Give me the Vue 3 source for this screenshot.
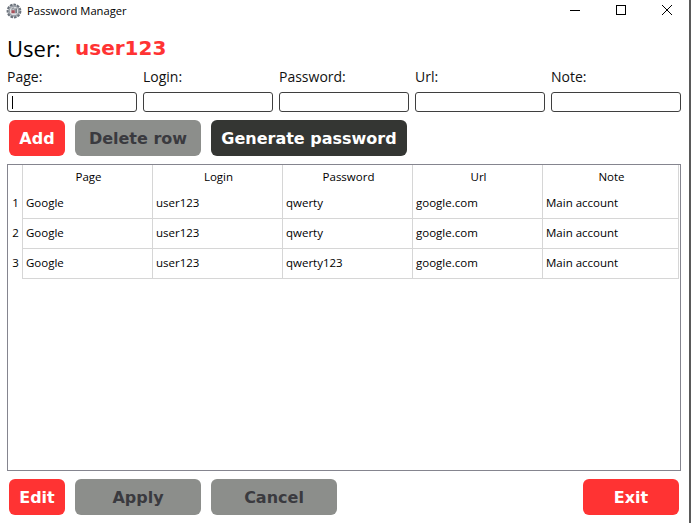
<template>
  <div class="window">
    <div class="titlebar">
      <svg class="app-icon" width="16" height="16" viewBox="0 0 16 16">
        <circle cx="8" cy="8" r="6.4" fill="#c9cbce" stroke="#6a717b" stroke-width="2" stroke-dasharray="2.6 1" />
        <circle cx="8" cy="8" r="4.9" fill="#dcdee1" stroke="#858c96" stroke-width="1" />
        <rect x="5.4" y="7.2" width="3.4" height="3" fill="#a8505a" />
        <path d="M6 7.2V6a1.1 1.1 0 0 1 2.2 0v1.2" fill="none" stroke="#6b6f78" stroke-width="0.8" />
        <rect x="9.4" y="5.4" width="1.4" height="4.8" fill="#5f6670" />
      </svg>
      <span class="title">Password Manager</span>
      <div class="win-controls">
        <svg width="46" height="22" viewBox="0 0 46 22"><path d="M18 10.5H28" stroke="#000" stroke-width="1" /></svg>
        <svg width="46" height="22" viewBox="0 0 46 22"><rect x="18.5" y="5.5" width="9" height="9" fill="none" stroke="#000" stroke-width="1" /></svg>
        <svg width="46" height="22" viewBox="0 0 46 22"><path d="M18 5L28 15M28 5L18 15" stroke="#000" stroke-width="1" /></svg>
      </div>
    </div>

    <div class="content">
      <div class="user-line">
        <span class="user-label">User:</span>
        <span class="user-name">user123</span>
      </div>

      <div class="fields">
        <div v-for="(f, i) in fields" :key="f" class="field">
          <label>{{ f }}:</label>
          <div class="input" :class="{ focused: i === 0 }"></div>
        </div>
      </div>

      <div class="btn-row">
        <button class="btn red small">Add</button>
        <button class="btn grey wide">Delete row</button>
        <button class="btn dark generate">Generate password</button>
      </div>

      <div class="table-box">
        <div class="grid head">
          <div class="corner"></div>
          <div v-for="c in columns" :key="c.key" class="th">{{ c.label }}</div>
        </div>
        <div v-for="(row, n) in rows" :key="n" class="grid row">
          <div class="row-num">{{ n + 1 }}</div>
          <div v-for="c in columns" :key="c.key" class="td">{{ row[c.key] }}</div>
        </div>
      </div>

      <div class="btn-row bottom">
        <button class="btn red small">Edit</button>
        <button class="btn grey wide">Apply</button>
        <button class="btn grey wide">Cancel</button>
        <button class="btn red exit">Exit</button>
      </div>
    </div>
  </div>
</template>

<script setup>
const fields = ['Page', 'Login', 'Password', 'Url', 'Note']

const columns = [
  { key: 'page', label: 'Page' },
  { key: 'login', label: 'Login' },
  { key: 'password', label: 'Password' },
  { key: 'url', label: 'Url' },
  { key: 'note', label: 'Note' }
]

const rows = [
  { page: 'Google', login: 'user123', password: 'qwerty', url: 'google.com', note: 'Main account' },
  { page: 'Google', login: 'user123', password: 'qwerty', url: 'google.com', note: 'Main account' },
  { page: 'Google', login: 'user123', password: 'qwerty123', url: 'google.com', note: 'Main account' }
]
</script>

<style>
html, body {
  margin: 0;
  background: #fff;
}
</style>

<style scoped>
.window {
  width: 691px;
  height: 523px;
  box-sizing: border-box;
  background: #fff;
  border-right: 2px solid #5a5a5a;
  font-family: "Open Sans", "Noto Sans", sans-serif;
  color: #000;
  overflow: hidden;
}

.titlebar {
  height: 21px;
  display: flex;
  align-items: center;
  padding-left: 6px;
}

.app-icon {
  margin-right: 5px;
}

.title {
  font-size: 11.2px;
}

.win-controls {
  margin-left: auto;
  display: flex;
  margin-right: -1px;
  align-self: flex-start;
}

.content {
  padding: 0 8px 0 7px;
}

.user-line {
  height: 32px;
  margin-top: 11px;
  display: flex;
  align-items: center;
}

.user-label {
  font-size: 22px;
  width: 68px;
}

.user-name {
  font-family: "DejaVu Sans", sans-serif;
  font-weight: 700;
  font-size: 20px;
  color: #ff3333;
}

.fields {
  display: flex;
  gap: 6px;
  margin-top: 4px;
}

.field {
  width: 130px;
}

.field label {
  display: block;
  height: 17px;
  line-height: 17px;
  margin-bottom: 7px;
  font-size: 14px;
  color: #111;
}

.input {
  height: 20px;
  box-sizing: border-box;
  border: 1px solid #3f3f3f;
  border-radius: 3px;
  position: relative;
}

.input.focused::after {
  content: "";
  position: absolute;
  left: 4px;
  top: 3px;
  width: 1px;
  height: 13px;
  background: #000;
}

.btn-row {
  display: flex;
  gap: 10px;
  padding-left: 2px;
  margin-top: 8px;
}

.btn {
  height: 36px;
  border: 0;
  border-radius: 6px;
  padding: 0;
  font-family: "DejaVu Sans", sans-serif;
  font-weight: 700;
  font-size: 16px;
}

.red {
  background: #ff3333;
  color: #fff;
}

.grey {
  background: #8c8e8b;
  color: #3a3a3f;
}

.dark {
  background: #343633;
  color: #fff;
}

.small {
  width: 56px;
}

.wide {
  width: 126px;
}

.generate {
  width: 196px;
}

.exit {
  width: 96px;
  margin-left: auto;
  margin-right: 2px;
}

.table-box {
  height: 307px;
  box-sizing: border-box;
  margin-top: 8px;
  border: 1px solid #85858f;
  font-size: 11.5px;
}

.grid {
  display: grid;
  grid-template-columns: 14px 130px 130px 130px 130px 137px;
}

.head {
  height: 23px;
}

.row {
  height: 30px;
}

.th {
  text-align: center;
  line-height: 23px;
  padding-left: 2px;
  border-left: 1px solid #d6d6d6;
  box-sizing: border-box;
}

.th:last-child {
  border-right: 1px solid #d6d6d6;
}

.row-num {
  text-align: center;
  line-height: 30px;
  padding-left: 1px;
}

.td {
  box-sizing: border-box;
  line-height: 30px;
  padding-left: 3px;
  border-left: 1px solid #d6d6d6;
  border-bottom: 1px solid #d6d6d6;
  white-space: nowrap;
}

.td:last-child {
  border-right: 1px solid #d6d6d6;
}

.bottom {
  margin-top: 8px;
}
</style>
